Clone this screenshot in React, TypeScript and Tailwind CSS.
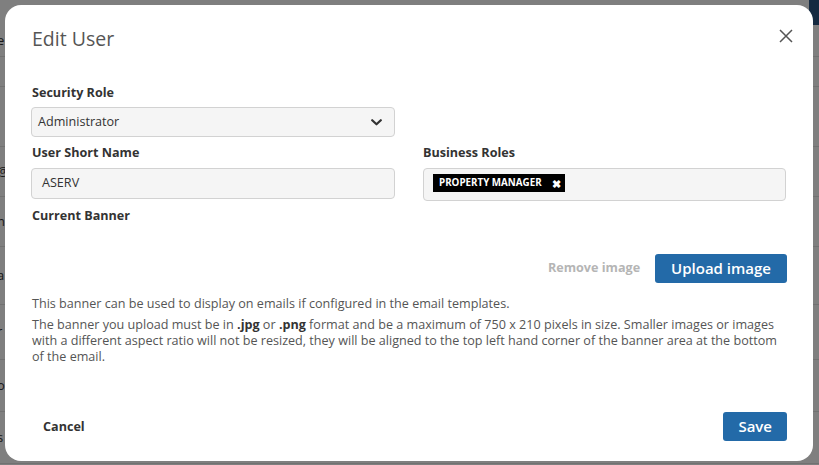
import React from "react";

function Chevron() {
  return (
    <svg width="11" height="7" viewBox="0 0 11 7" fill="none">
      <path d="M1.2 1.2 L5.5 5.3 L9.8 1.2" stroke="#333" strokeWidth="2.2" strokeLinecap="round" strokeLinejoin="round" />
    </svg>
  );
}

function CloseX() {
  return (
    <svg width="14" height="14" viewBox="0 0 14 14" fill="none">
      <path d="M1 1 L13 13 M13 1 L1 13" stroke="#555" strokeWidth="1.5" />
    </svg>
  );
}

const rows = [
  { h: "h-[32px]", t: "e" },
  { h: "h-[30px]", t: "" },
  { h: "h-[60px]", t: "" },
  { h: "h-[50px]", t: "@" },
  { h: "h-[50px]", t: "n" },
  { h: "h-[58px]", t: "a" },
  { h: "h-[55px]", t: "r" },
  { h: "h-[52px]", t: "o" },
  { h: "h-[52px]", t: "s" },
];

export default function App() {
  return (
    <div className="relative h-[465px] w-[819px] overflow-hidden bg-white font-['Open_Sans',sans-serif]">
      {/* page behind the dialog */}
      <div className="flex h-[25px] justify-end">
        <div className="w-[10px] bg-[#2a5582]" />
      </div>
      {rows.map((r, i) => (
        <div key={i} className={`flex ${r.h} items-center border-b border-[#e2e2e2] text-[13px] text-[#333]`}>
          <span className="ml-[-3px]">{r.t}</span>
        </div>
      ))}

      {/* overlay */}
      <div className="absolute inset-0 bg-black/50 pt-[5px] pl-[5px] pr-[6px] pb-[4px]">
        <div className="flex h-full flex-col rounded-[16px] bg-white pl-[26px] pr-[27px] pt-[20px] pb-[20px] text-[#333]">
          <div className="flex items-start justify-between">
            <h2 className="pl-[1px] text-[19.5px] leading-[28px] font-normal text-[#555]">Edit User</h2>
            <button className="mr-[-7px] mt-[4px] text-[#555]">
              <CloseX />
            </button>
          </div>

          <div className="mt-[30px] pl-[1px] text-[12.6px] leading-[20px] font-bold text-[#333]">Security Role</div>
          <div className="mt-[4px] flex h-[30px] w-[364px] items-center justify-between rounded-[4px] border border-[#d2d2d2] bg-[#f5f5f5] pl-[6px] pr-[12px] text-[12.6px] text-[#333]">
            <span>Administrator</span>
            <Chevron />
          </div>

          <div className="mt-[6px] grid grid-cols-[364px_363px] items-start gap-x-[28px]">
            <div className="flex flex-col">
              <div className="pl-[1px] text-[12.6px] leading-[20px] font-bold text-[#333]">User Short Name</div>
              <div className="mt-[5px] flex h-[31px] items-center rounded-[4px] border border-[#d2d2d2] bg-[#f5f5f5] pl-[10px] text-[12.6px] text-[#333]">
                ASERV
              </div>
            </div>
            <div className="flex flex-col">
              <div className="text-[12.6px] leading-[20px] font-bold text-[#333]">Business Roles</div>
              <div className="mt-[5px] flex h-[33px] items-start rounded-[4px] border border-[#d2d2d2] bg-[#f5f5f5] pl-[9px] pt-[5px]">
                <span className="flex h-[18px] items-center gap-[10px] bg-black pl-[6px] pr-[4px] text-[9.8px] font-bold text-white">
                  PROPERTY MANAGER
                  <span className="text-[11px] leading-none">✖</span>
                </span>
              </div>
            </div>
          </div>

          <div className="mt-[5px] pl-[1px] text-[12.6px] leading-[20px] font-bold text-[#333]">Current Banner</div>

          <div className="mt-[28px] flex items-center justify-end gap-[15px]">
            <button className="text-[12.6px] font-bold text-[#b5b5b5]">Remove image</button>
            <button className="mr-[-1px] h-[29px] rounded-[3px] bg-[#236aa8] px-[16px] text-[15px] font-semibold text-white">
              Upload image
            </button>
          </div>

          <p className="mt-[13px] pl-[1px] text-[12.6px] leading-[16px] text-[#555]">
            This banner can be used to display on emails if configured in the email templates.
          </p>
          <p className="mt-[5px] pl-[1px] text-[12.6px] leading-[16px] text-[#555]">
            The banner you upload must be in <b className="text-[#333]">.jpg</b> or <b className="text-[#333]">.png</b> format and be a maximum of 750 x 210 pixels in size. Smaller images or images with a different aspect ratio will not be resized, they will be aligned to the top left hand corner of the banner area at the bottom of the email.
          </p>

          <div className="mt-auto flex items-center justify-between">
            <button className="pl-[12px] text-[12.6px] leading-[20px] font-bold text-[#333]">Cancel</button>
            <button className="mr-[-1px] h-[29px] rounded-[3px] bg-[#236aa8] px-[15px] text-[15px] font-semibold text-white">
              Save
            </button>
          </div>
        </div>
      </div>
    </div>
  );
}
